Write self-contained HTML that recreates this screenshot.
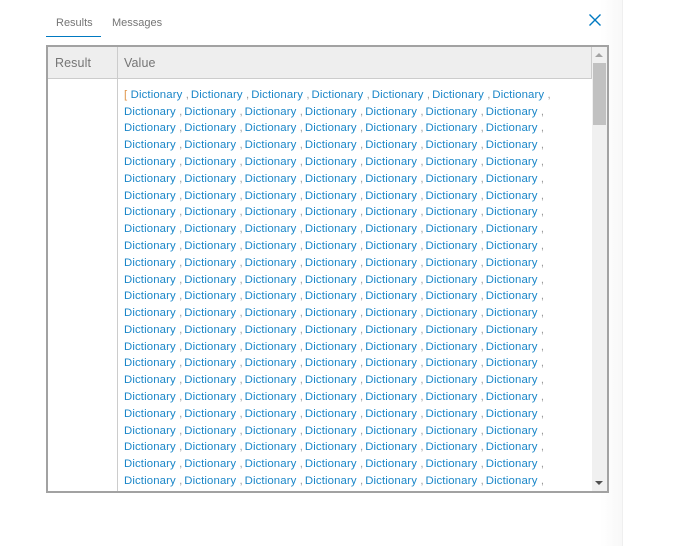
<!DOCTYPE html>
<html><head><meta charset="utf-8"><style>
html,body{margin:0;padding:0;background:#fff}
body{width:692px;height:546px;position:relative;overflow:hidden;font-family:"Liberation Sans",sans-serif}
.sh{position:absolute;left:600px;top:0;width:22px;height:546px;background:linear-gradient(to right,#fff,#f8f8f8)}
.ln{position:absolute;left:622px;top:0;width:1px;height:546px;background:#efefef}
.tab{position:absolute;top:17px;font-size:11px;line-height:13px;color:#757575;white-space:nowrap}
.ul{position:absolute;left:46px;top:36px;width:55px;height:1px;background:#0079c1}
.box{position:absolute;left:46px;top:45px;width:559px;height:444px;border:2px solid #a2a2a2;background:#fff;overflow:hidden}
.hd{position:absolute;left:0;top:0;width:543px;height:31px;background:#eee;border-bottom:1px solid #ccc;border-right:1px solid #ccc}
.hd b{position:absolute;top:9px;font-weight:normal;font-size:12.5px;line-height:15px;color:#757575;letter-spacing:.1px}
.col{position:absolute;left:69px;top:0;width:1px;height:444px;background:#ccc}
.sb{position:absolute;left:544px;top:0;width:15px;height:444px;background:#f0f0f0}
.th{position:absolute;left:1px;top:16px;width:13px;height:62px;background:#c1c1c1}
.up{position:absolute;left:3px;top:6px;border:4px solid transparent;border-top:0;border-bottom:4px solid #a3a3a3}
.dn{position:absolute;left:3px;top:434px;border:4px solid transparent;border-bottom:0;border-top:4px solid #505050}
.t{position:absolute;left:76px;top:40px;width:470px;font-size:11.4px;letter-spacing:.12px;line-height:17px;color:#1a86c8;white-space:nowrap}
.t div{height:17px}
.t div:nth-child(2),.t div:nth-child(7),.t div:nth-child(12),.t div:nth-child(16),.t div:nth-child(21){height:16px}
.t i{font-style:normal;display:inline-block;width:60.3px}
.t u{text-decoration:none;color:#9a9a9a}
.t s{text-decoration:none;color:#e0954a;display:inline-block;width:6.6px}
svg{position:absolute;left:588px;top:13px}
</style></head><body>
<div class="sh"></div><div class="ln"></div>
<div class="tab" style="left:56px">Results</div>
<div class="tab" style="left:112px">Messages</div>
<div class="ul"></div>
<svg width="14" height="14" viewBox="0 0 14 14"><path d="M1.5 1.5L12.5 12.5M12.5 1.5L1.5 12.5" stroke="#0079c1" stroke-width="1.4" fill="none"/></svg>
<div class="box">
<div class="hd"><b style="left:7px">Result</b><b style="left:76px">Value</b></div>
<div class="col"></div>
<div class="sb"><div class="up"></div><div class="th"></div><div class="dn"></div></div>
<div class="t">
<div><s>[</s><i>Dictionary <u>,</u></i><i>Dictionary <u>,</u></i><i>Dictionary <u>,</u></i><i>Dictionary <u>,</u></i><i>Dictionary <u>,</u></i><i>Dictionary <u>,</u></i><i>Dictionary <u>,</u></i></div>
<div><i>Dictionary <u>,</u></i><i>Dictionary <u>,</u></i><i>Dictionary <u>,</u></i><i>Dictionary <u>,</u></i><i>Dictionary <u>,</u></i><i>Dictionary <u>,</u></i><i>Dictionary <u>,</u></i></div>
<div><i>Dictionary <u>,</u></i><i>Dictionary <u>,</u></i><i>Dictionary <u>,</u></i><i>Dictionary <u>,</u></i><i>Dictionary <u>,</u></i><i>Dictionary <u>,</u></i><i>Dictionary <u>,</u></i></div>
<div><i>Dictionary <u>,</u></i><i>Dictionary <u>,</u></i><i>Dictionary <u>,</u></i><i>Dictionary <u>,</u></i><i>Dictionary <u>,</u></i><i>Dictionary <u>,</u></i><i>Dictionary <u>,</u></i></div>
<div><i>Dictionary <u>,</u></i><i>Dictionary <u>,</u></i><i>Dictionary <u>,</u></i><i>Dictionary <u>,</u></i><i>Dictionary <u>,</u></i><i>Dictionary <u>,</u></i><i>Dictionary <u>,</u></i></div>
<div><i>Dictionary <u>,</u></i><i>Dictionary <u>,</u></i><i>Dictionary <u>,</u></i><i>Dictionary <u>,</u></i><i>Dictionary <u>,</u></i><i>Dictionary <u>,</u></i><i>Dictionary <u>,</u></i></div>
<div><i>Dictionary <u>,</u></i><i>Dictionary <u>,</u></i><i>Dictionary <u>,</u></i><i>Dictionary <u>,</u></i><i>Dictionary <u>,</u></i><i>Dictionary <u>,</u></i><i>Dictionary <u>,</u></i></div>
<div><i>Dictionary <u>,</u></i><i>Dictionary <u>,</u></i><i>Dictionary <u>,</u></i><i>Dictionary <u>,</u></i><i>Dictionary <u>,</u></i><i>Dictionary <u>,</u></i><i>Dictionary <u>,</u></i></div>
<div><i>Dictionary <u>,</u></i><i>Dictionary <u>,</u></i><i>Dictionary <u>,</u></i><i>Dictionary <u>,</u></i><i>Dictionary <u>,</u></i><i>Dictionary <u>,</u></i><i>Dictionary <u>,</u></i></div>
<div><i>Dictionary <u>,</u></i><i>Dictionary <u>,</u></i><i>Dictionary <u>,</u></i><i>Dictionary <u>,</u></i><i>Dictionary <u>,</u></i><i>Dictionary <u>,</u></i><i>Dictionary <u>,</u></i></div>
<div><i>Dictionary <u>,</u></i><i>Dictionary <u>,</u></i><i>Dictionary <u>,</u></i><i>Dictionary <u>,</u></i><i>Dictionary <u>,</u></i><i>Dictionary <u>,</u></i><i>Dictionary <u>,</u></i></div>
<div><i>Dictionary <u>,</u></i><i>Dictionary <u>,</u></i><i>Dictionary <u>,</u></i><i>Dictionary <u>,</u></i><i>Dictionary <u>,</u></i><i>Dictionary <u>,</u></i><i>Dictionary <u>,</u></i></div>
<div><i>Dictionary <u>,</u></i><i>Dictionary <u>,</u></i><i>Dictionary <u>,</u></i><i>Dictionary <u>,</u></i><i>Dictionary <u>,</u></i><i>Dictionary <u>,</u></i><i>Dictionary <u>,</u></i></div>
<div><i>Dictionary <u>,</u></i><i>Dictionary <u>,</u></i><i>Dictionary <u>,</u></i><i>Dictionary <u>,</u></i><i>Dictionary <u>,</u></i><i>Dictionary <u>,</u></i><i>Dictionary <u>,</u></i></div>
<div><i>Dictionary <u>,</u></i><i>Dictionary <u>,</u></i><i>Dictionary <u>,</u></i><i>Dictionary <u>,</u></i><i>Dictionary <u>,</u></i><i>Dictionary <u>,</u></i><i>Dictionary <u>,</u></i></div>
<div><i>Dictionary <u>,</u></i><i>Dictionary <u>,</u></i><i>Dictionary <u>,</u></i><i>Dictionary <u>,</u></i><i>Dictionary <u>,</u></i><i>Dictionary <u>,</u></i><i>Dictionary <u>,</u></i></div>
<div><i>Dictionary <u>,</u></i><i>Dictionary <u>,</u></i><i>Dictionary <u>,</u></i><i>Dictionary <u>,</u></i><i>Dictionary <u>,</u></i><i>Dictionary <u>,</u></i><i>Dictionary <u>,</u></i></div>
<div><i>Dictionary <u>,</u></i><i>Dictionary <u>,</u></i><i>Dictionary <u>,</u></i><i>Dictionary <u>,</u></i><i>Dictionary <u>,</u></i><i>Dictionary <u>,</u></i><i>Dictionary <u>,</u></i></div>
<div><i>Dictionary <u>,</u></i><i>Dictionary <u>,</u></i><i>Dictionary <u>,</u></i><i>Dictionary <u>,</u></i><i>Dictionary <u>,</u></i><i>Dictionary <u>,</u></i><i>Dictionary <u>,</u></i></div>
<div><i>Dictionary <u>,</u></i><i>Dictionary <u>,</u></i><i>Dictionary <u>,</u></i><i>Dictionary <u>,</u></i><i>Dictionary <u>,</u></i><i>Dictionary <u>,</u></i><i>Dictionary <u>,</u></i></div>
<div><i>Dictionary <u>,</u></i><i>Dictionary <u>,</u></i><i>Dictionary <u>,</u></i><i>Dictionary <u>,</u></i><i>Dictionary <u>,</u></i><i>Dictionary <u>,</u></i><i>Dictionary <u>,</u></i></div>
<div><i>Dictionary <u>,</u></i><i>Dictionary <u>,</u></i><i>Dictionary <u>,</u></i><i>Dictionary <u>,</u></i><i>Dictionary <u>,</u></i><i>Dictionary <u>,</u></i><i>Dictionary <u>,</u></i></div>
<div><i>Dictionary <u>,</u></i><i>Dictionary <u>,</u></i><i>Dictionary <u>,</u></i><i>Dictionary <u>,</u></i><i>Dictionary <u>,</u></i><i>Dictionary <u>,</u></i><i>Dictionary <u>,</u></i></div>
<div><i>Dictionary <u>,</u></i><i>Dictionary <u>,</u></i><i>Dictionary <u>,</u></i><i>Dictionary <u>,</u></i><i>Dictionary <u>,</u></i><i>Dictionary <u>,</u></i><i>Dictionary <u>,</u></i></div>
</div>
</div>
</body></html>
